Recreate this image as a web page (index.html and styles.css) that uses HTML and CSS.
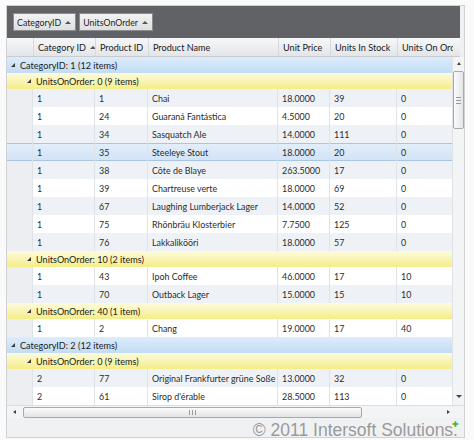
FILE: index.html
```html
<!DOCTYPE html>
<html lang="en">
<head>
  <meta charset="UTF-8">
  <title>Grouped Grid</title>
  <link rel="stylesheet" href="styles.css">
</head>
<body>
  <div class="grid">
    <!-- group-by panel -->
    <div class="group-panel">
      <span class="chip">CategoryID <i class="sort"></i></span>
      <span class="chip">UnitsOnOrder <i class="sort"></i></span>
    </div>

    <!-- column headers -->
    <div class="row col-header">
      <div></div>
      <div class="hcell">Category ID <i class="sort"></i></div>
      <div class="hcell">Product ID</div>
      <div class="hcell">Product Name</div>
      <div class="hcell">Unit Price</div>
      <div class="hcell">Units In Stock</div>
      <div class="hcell">Units On Order</div>
    </div>

    <div class="body">
      <div class="rows">
        <div class="group cat"><i class="expand"></i>CategoryID: 1 (12 items)</div>
        <div class="group units"><i class="expand"></i>UnitsOnOrder: 0 (9 items)</div>
        <div class="row data alt"><div></div><div>1</div><div>1</div><div>Chai</div><div>18.0000</div><div>39</div><div>0</div></div>
        <div class="row data"><div></div><div>1</div><div>24</div><div>Guaraná Fantástica</div><div>4.5000</div><div>20</div><div>0</div></div>
        <div class="row data alt"><div></div><div>1</div><div>34</div><div>Sasquatch Ale</div><div>14.0000</div><div>111</div><div>0</div></div>
        <div class="row data selected"><div></div><div>1</div><div>35</div><div>Steeleye Stout</div><div>18.0000</div><div>20</div><div>0</div></div>
        <div class="row data alt"><div></div><div>1</div><div>38</div><div>Côte de Blaye</div><div>263.5000</div><div>17</div><div>0</div></div>
        <div class="row data"><div></div><div>1</div><div>39</div><div>Chartreuse verte</div><div>18.0000</div><div>69</div><div>0</div></div>
        <div class="row data alt"><div></div><div>1</div><div>67</div><div>Laughing Lumberjack Lager</div><div>14.0000</div><div>52</div><div>0</div></div>
        <div class="row data"><div></div><div>1</div><div>75</div><div>Rhönbräu Klosterbier</div><div>7.7500</div><div>125</div><div>0</div></div>
        <div class="row data alt"><div></div><div>1</div><div>76</div><div>Lakkalikööri</div><div>18.0000</div><div>57</div><div>0</div></div>
        <div class="group units"><i class="expand"></i>UnitsOnOrder: 10 (2 items)</div>
        <div class="row data"><div></div><div>1</div><div>43</div><div>Ipoh Coffee</div><div>46.0000</div><div>17</div><div>10</div></div>
        <div class="row data alt"><div></div><div>1</div><div>70</div><div>Outback Lager</div><div>15.0000</div><div>15</div><div>10</div></div>
        <div class="group units"><i class="expand"></i>UnitsOnOrder: 40 (1 item)</div>
        <div class="row data"><div></div><div>1</div><div>2</div><div>Chang</div><div>19.0000</div><div>17</div><div>40</div></div>
        <div class="group cat"><i class="expand"></i>CategoryID: 2 (12 items)</div>
        <div class="group units"><i class="expand"></i>UnitsOnOrder: 0 (9 items)</div>
        <div class="row data alt"><div></div><div>2</div><div>77</div><div>Original Frankfurter grüne Soße</div><div>13.0000</div><div>32</div><div>0</div></div>
        <div class="row data"><div></div><div>2</div><div>61</div><div>Sirop d'érable</div><div>28.5000</div><div>113</div><div>0</div></div>
      </div>

      <!-- vertical scrollbar -->
      <div class="vscroll">
        <i class="arrow up"></i>
        <div class="vthumb"><span class="grip-h"></span></div>
        <div class="vtrack"></div>
        <i class="arrow down"></i>
      </div>
    </div>

    <!-- horizontal scrollbar -->
    <div class="hscroll">
      <i class="arrow left"></i>
      <div class="hthumb"><span class="grip-v"></span></div>
      <div class="htrack"></div>
      <i class="arrow right"></i>
    </div>

    <div class="footer">
      <span class="resize">&#10010;</span>
    </div>

    <div class="watermark">© 2011 Intersoft Solutions.</div>
  </div>
</body>
</html>
```

FILE: styles.css
```css
/* base */
body {
  margin: 0;
  background: #fafafa;
  font-family: 'Lato', 'Liberation Sans', sans-serif;
  font-size: 8.9px;
  color: #2b2b2b;
}

.grid {
  position: relative;
  margin: 5px 0 0 6px;
  width: 459px;
  height: 433px;
  border: 1px solid #cfd1d4;
  background: #eef0f2;
  display: flex;
  flex-direction: column;
  box-sizing: border-box;
}

/* group-by panel */
.group-panel {
  height: 32px;
  background: #606266;
  padding: 7px 6px 0;
  display: flex;
  gap: 3px;
  box-sizing: border-box;
  margin-right: 4px;
}

.chip {
  height: 18px;
  padding: 0 4px 0 3px;
  display: flex;
  align-items: center;
  gap: 4px;
  background: linear-gradient(#f2f2f2, #dedfe0);
  border: 1px solid #8c8d90;
  box-sizing: border-box;
  color: #1e1e1e;
  font-size: 8.8px;
}

.sort {
  display: inline-block;
  width: 0;
  height: 0;
  border-left: 3px solid transparent;
  border-right: 3px solid transparent;
  border-bottom: 3px solid #555;
}

/* rows */
.row {
  display: grid;
  grid-template-columns: 26px 62px 53px 130px 52px 67px 56px;
}

.col-header {
  height: 19px;
  background: linear-gradient(#f6f7f8, #e3e5e8);
  border-bottom: 1px solid #c9cbce;
  box-sizing: border-box;
  margin-right: 4px;
  font-size: 9.1px;
}

.hcell {
  display: flex;
  align-items: center;
  gap: 4px;
  padding-left: 4px;
  border-left: 1px solid #d6d8db;
  white-space: nowrap;
  overflow: hidden;
  color: #1a1a1a;
}

.col-header .hcell:first-of-type {
  border-left: none;
}

.body {
  flex: 1;
  display: flex;
  min-height: 0;
}

.rows {
  width: 446px;
  background: #ffffff;
  overflow: hidden;
}

.group {
  height: 16px;
  display: flex;
  align-items: center;
  white-space: nowrap;
  color: #222;
  font-size: 9.1px;
}

.group.cat {
  padding-left: 4px;
  background: linear-gradient(#dcecfb, #c2dcf3);
}

.group.units {
  padding-left: 20px;
  background: linear-gradient(#fdfbe0, #f5ed86);
}

.expand {
  display: inline-block;
  width: 0;
  height: 0;
  border-left: 4px solid transparent;
  border-bottom: 4px solid #3a3a3a;
  margin-right: 5px;
}

.data {
  height: 18px;
  background: #ffffff;
}

.data.alt {
  background: #eef2f7;
}

.data.selected {
  background: linear-gradient(#e3eefa, #d1e3f6);
  box-shadow: inset 0 1px #a9c5e6, inset 0 -1px #a9c5e6;
}

.data > div {
  display: flex;
  align-items: center;
  padding-left: 4px;
  border-right: 1px solid #dfe2e6;
  white-space: nowrap;
  overflow: hidden;
}

.data > div:first-child {
  background: #eceef1;
  padding-left: 0;
}

.data.selected > div:first-child {
  background: transparent;
}

.data > div:last-child {
  border-right: none;
}

/* scrollbars */
.vscroll {
  width: 11px;
  display: flex;
  flex-direction: column;
  align-items: center;
  background: #f3f4f5;
  border-left: 1px solid #e0e2e4;
}

.arrow {
  display: block;
  width: 0;
  height: 0;
  flex: none;
}

.arrow.up {
  margin: 5px 0 6px;
  border-left: 2px solid transparent;
  border-right: 2px solid transparent;
  border-bottom: 3px solid #444;
}

.arrow.down {
  margin: 5px 0 7px;
  border-left: 3px solid transparent;
  border-right: 3px solid transparent;
  border-top: 3px solid #444;
}

.vthumb {
  width: 11px;
  height: 58px;
  flex: none;
  display: flex;
  align-items: center;
  justify-content: center;
  background: linear-gradient(90deg, #fbfbfb, #e4e5e7);
  border: 1px solid #a7a9ac;
  border-radius: 2px;
  box-sizing: border-box;
}

.grip-h {
  width: 5px;
  height: 5px;
  border-top: 1px solid #9a9a9a;
  border-bottom: 1px solid #9a9a9a;
  background: linear-gradient(#9a9a9a, #9a9a9a) center / 5px 1px no-repeat;
}

.vtrack {
  flex: 1;
}

.hscroll {
  height: 13px;
  display: flex;
  align-items: center;
  background: #f3f4f5;
  border-top: 1px solid #dcdee1;
  padding: 0 6px 0 6px;
  box-sizing: border-box;
}

.arrow.left {
  margin-right: 7px;
  border-top: 2px solid transparent;
  border-bottom: 2px solid transparent;
  border-right: 3px solid #444;
}

.arrow.right {
  margin-left: 6px;
  margin-right: 8px;
  border-top: 2px solid transparent;
  border-bottom: 2px solid transparent;
  border-left: 3px solid #444;
}

.hthumb {
  width: 339px;
  height: 11px;
  flex: none;
  display: flex;
  align-items: center;
  justify-content: center;
  background: linear-gradient(#fbfbfb, #e2e3e5);
  border: 1px solid #a7a9ac;
  border-radius: 2px;
  box-sizing: border-box;
}

.grip-v {
  width: 5px;
  height: 5px;
  border-left: 1px solid #9a9a9a;
  border-right: 1px solid #9a9a9a;
  background: linear-gradient(#9a9a9a, #9a9a9a) center / 1px 5px no-repeat;
}

.htrack {
  flex: 1;
}

.footer {
  height: 19px;
  background: #f0f1f2;
  display: flex;
  justify-content: flex-end;
  align-items: flex-start;
  padding-right: 5px;
}

.resize {
  font-size: 8px;
  line-height: 8px;
  color: #4caf2a;
  margin-top: 2px;
}

/* watermark overlaid on the bottom corner */
.watermark {
  position: absolute;
  right: 6px;
  bottom: -4px;
  font-family: 'Liberation Sans', Arial, sans-serif;
  font-size: 17.5px;
  color: rgba(130, 130, 130, 0.8);
  white-space: nowrap;
}
```
